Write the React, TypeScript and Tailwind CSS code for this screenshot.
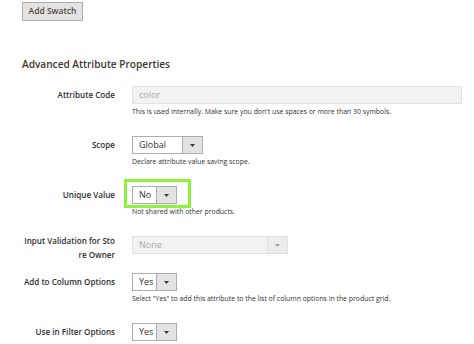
import React from 'react';

const font = { fontFamily: '"Open Sans", "Noto Sans", sans-serif' };

function Caret({ muted }: { muted?: boolean }) {
  return (
    <span className={`flex w-[20px] h-full items-center justify-center border-l ${muted ? 'bg-[#ececec] border-[#e0e0e0]' : 'bg-[#e3e3e3] border-[#adadad]'}`}>
      <svg width="5" height="3" viewBox="0 0 5 3">
        <path d="M0 0h5L2.5 3z" fill={muted ? '#a0a0a0' : '#41362f'} />
      </svg>
    </span>
  );
}

function Select({ value, width, disabled }: { value: string; width: string; disabled?: boolean }) {
  return (
    <div
      className={`flex h-[18px] items-stretch border ${width} ${disabled ? 'bg-[#f2f2f2] border-[#e0e0e0] text-[#a8a8a8]' : 'bg-white border-[#adadad] text-[#303030]'}`}
    >
      <span className="flex-1 flex items-center pl-[6px] text-[9px]">{value}</span>
      <Caret muted={disabled} />
    </div>
  );
}

function Row({ label, children, help, twoLine }: { label: React.ReactNode; children: React.ReactNode; help?: string; twoLine?: boolean }) {
  return (
    <div className="flex mb-[19px]">
      <div
        className={`w-[103px] shrink-0 whitespace-nowrap text-right text-[8.1px] font-semibold text-[#303030] ${twoLine ? 'leading-[14px] -mt-[2px] -mb-[8px]' : 'leading-[18px]'}`}
      >
        {label}
      </div>
      <div className="ml-[17px] flex-1">
        {children}
        {help && <p className="mt-[2px] whitespace-nowrap text-[6.9px] leading-[11px] text-[#303030]">{help}</p>}
      </div>
    </div>
  );
}

export default function App() {
  return (
    <div className="w-[474px] h-[344px] overflow-hidden bg-white pl-[12px] pr-[12px] pt-[2px]" style={font}>
      <button className="block ml-[10px] h-[19px] w-[61px] border border-[#adadad] bg-[#e3e3e3] text-[8.5px] font-semibold text-[#514943]">
        Add Swatch
      </button>

      <h2 className="ml-[10px] mt-[36px] mb-[15px] text-[10.1px] leading-[14px] font-semibold text-[#41362f]">
        Advanced Attribute Properties
      </h2>

      <Row label="Attribute Code" help="This is used internally. Make sure you don't use spaces or more than 30 symbols.">
        <div className="h-[18px] w-[330px] border border-[#e3e3e3] bg-[#f2f2f2] pl-[6px] flex items-center text-[9px] text-[#a8a8a8]">
          color
        </div>
      </Row>

      <Row label="Scope" help="Declare attribute value saving scope.">
        <Select value="Global" width="w-[71px]" />
      </Row>

      <Row label="Unique Value" help="Not shared with other products.">
        <div className="relative w-[45px]">
          <Select value="No" width="w-[45px]" />
          <span className="absolute -left-[8px] -top-[7px] w-[67px] h-[29px] border-[3px] border-[#8cf23a]" />
        </div>
      </Row>

      <Row
        twoLine
        label={
          <>
            Input Validation for Sto
            <br />
            re Owner
          </>
        }
      >
        <Select value="None" width="w-[156px]" disabled />
      </Row>

      <Row label="Add to Column Options" help={'Select "Yes" to add this attribute to the list of column options in the product grid.'}>
        <Select value="Yes" width="w-[45px]" />
      </Row>

      <Row label="Use in Filter Options">
        <Select value="Yes" width="w-[45px]" />
      </Row>
    </div>
  );
}
